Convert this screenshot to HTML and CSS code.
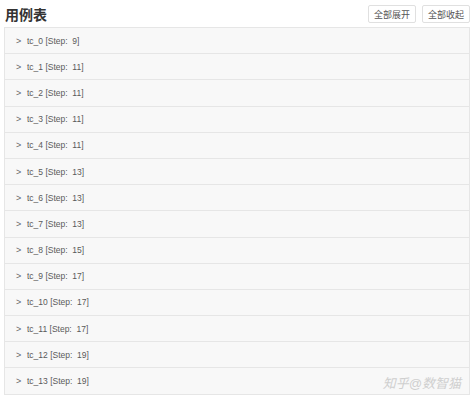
FILE: index.html
```html
<!DOCTYPE html>
<html lang="zh">
<head>
  <meta charset="UTF-8">
  <title>用例表</title>
  <link rel="stylesheet" href="styles.css">
</head>
<body>
  <div class="header">
    <h2>用例表</h2>
    <div class="actions">
      <button>全部展开</button>
      <button>全部收起</button>
    </div>
  </div>

  <div class="list">
    <div class="row"><span class="caret">&gt;</span>tc_0 [Step:&nbsp; 9]</div>
    <div class="row"><span class="caret">&gt;</span>tc_1 [Step:&nbsp; 11]</div>
    <div class="row"><span class="caret">&gt;</span>tc_2 [Step:&nbsp; 11]</div>
    <div class="row"><span class="caret">&gt;</span>tc_3 [Step:&nbsp; 11]</div>
    <div class="row"><span class="caret">&gt;</span>tc_4 [Step:&nbsp; 11]</div>
    <div class="row"><span class="caret">&gt;</span>tc_5 [Step:&nbsp; 13]</div>
    <div class="row"><span class="caret">&gt;</span>tc_6 [Step:&nbsp; 13]</div>
    <div class="row"><span class="caret">&gt;</span>tc_7 [Step:&nbsp; 13]</div>
    <div class="row"><span class="caret">&gt;</span>tc_8 [Step:&nbsp; 15]</div>
    <div class="row"><span class="caret">&gt;</span>tc_9 [Step:&nbsp; 17]</div>
    <div class="row"><span class="caret">&gt;</span>tc_10 [Step:&nbsp; 17]</div>
    <div class="row"><span class="caret">&gt;</span>tc_11 [Step:&nbsp; 17]</div>
    <div class="row"><span class="caret">&gt;</span>tc_12 [Step:&nbsp; 19]</div>
    <div class="row"><span class="caret">&gt;</span>tc_13 [Step:&nbsp; 19]
      <span class="watermark">知乎@数智猫</span>
    </div>
  </div>
</body>
</html>
```

FILE: styles.css
```css
body {
  margin: 0;
  padding: 5px 4px;
  background-color: #ffffff;
  font-family: "Liberation Sans", Arial, "Noto Sans CJK SC", sans-serif;
  color: #5a5a5a;
}
.header {
  display: flex;
  justify-content: space-between;
  align-items: center;
  height: 18px;
  margin-bottom: 4px;
}
.header h2 {
  margin: 0 0 0 1px;
  font-size: 14px;
  font-weight: bold;
  color: #333;
}
.actions {
  display: flex;
  gap: 6px;
}
.actions button {
  height: 18px;
  width: 48px;
  padding: 0;
  background-color: #fff;
  border: 1px solid #e0e0e0;
  border-radius: 2px;
  font-family: inherit;
  font-size: 9px;
  color: #555;
}
.list {
  border: 1px solid #e6e6e6;
}
.row {
  position: relative;
  display: flex;
  align-items: center;
  height: 25.2px;
  padding-left: 11px;
  background-color: #f8f8f8;
  border-bottom: 1px solid #e6e6e6;
  font-size: 8.5px;
}
.row:last-child {
  border-bottom: none;
}
.caret {
  width: 11px;
  font-size: 9px;
  color: #666;
}
.watermark {
  position: absolute;
  right: 8px;
  top: 5px;
  font-size: 13px;
  font-style: italic;
  color: #cfcfcf;
}
```
